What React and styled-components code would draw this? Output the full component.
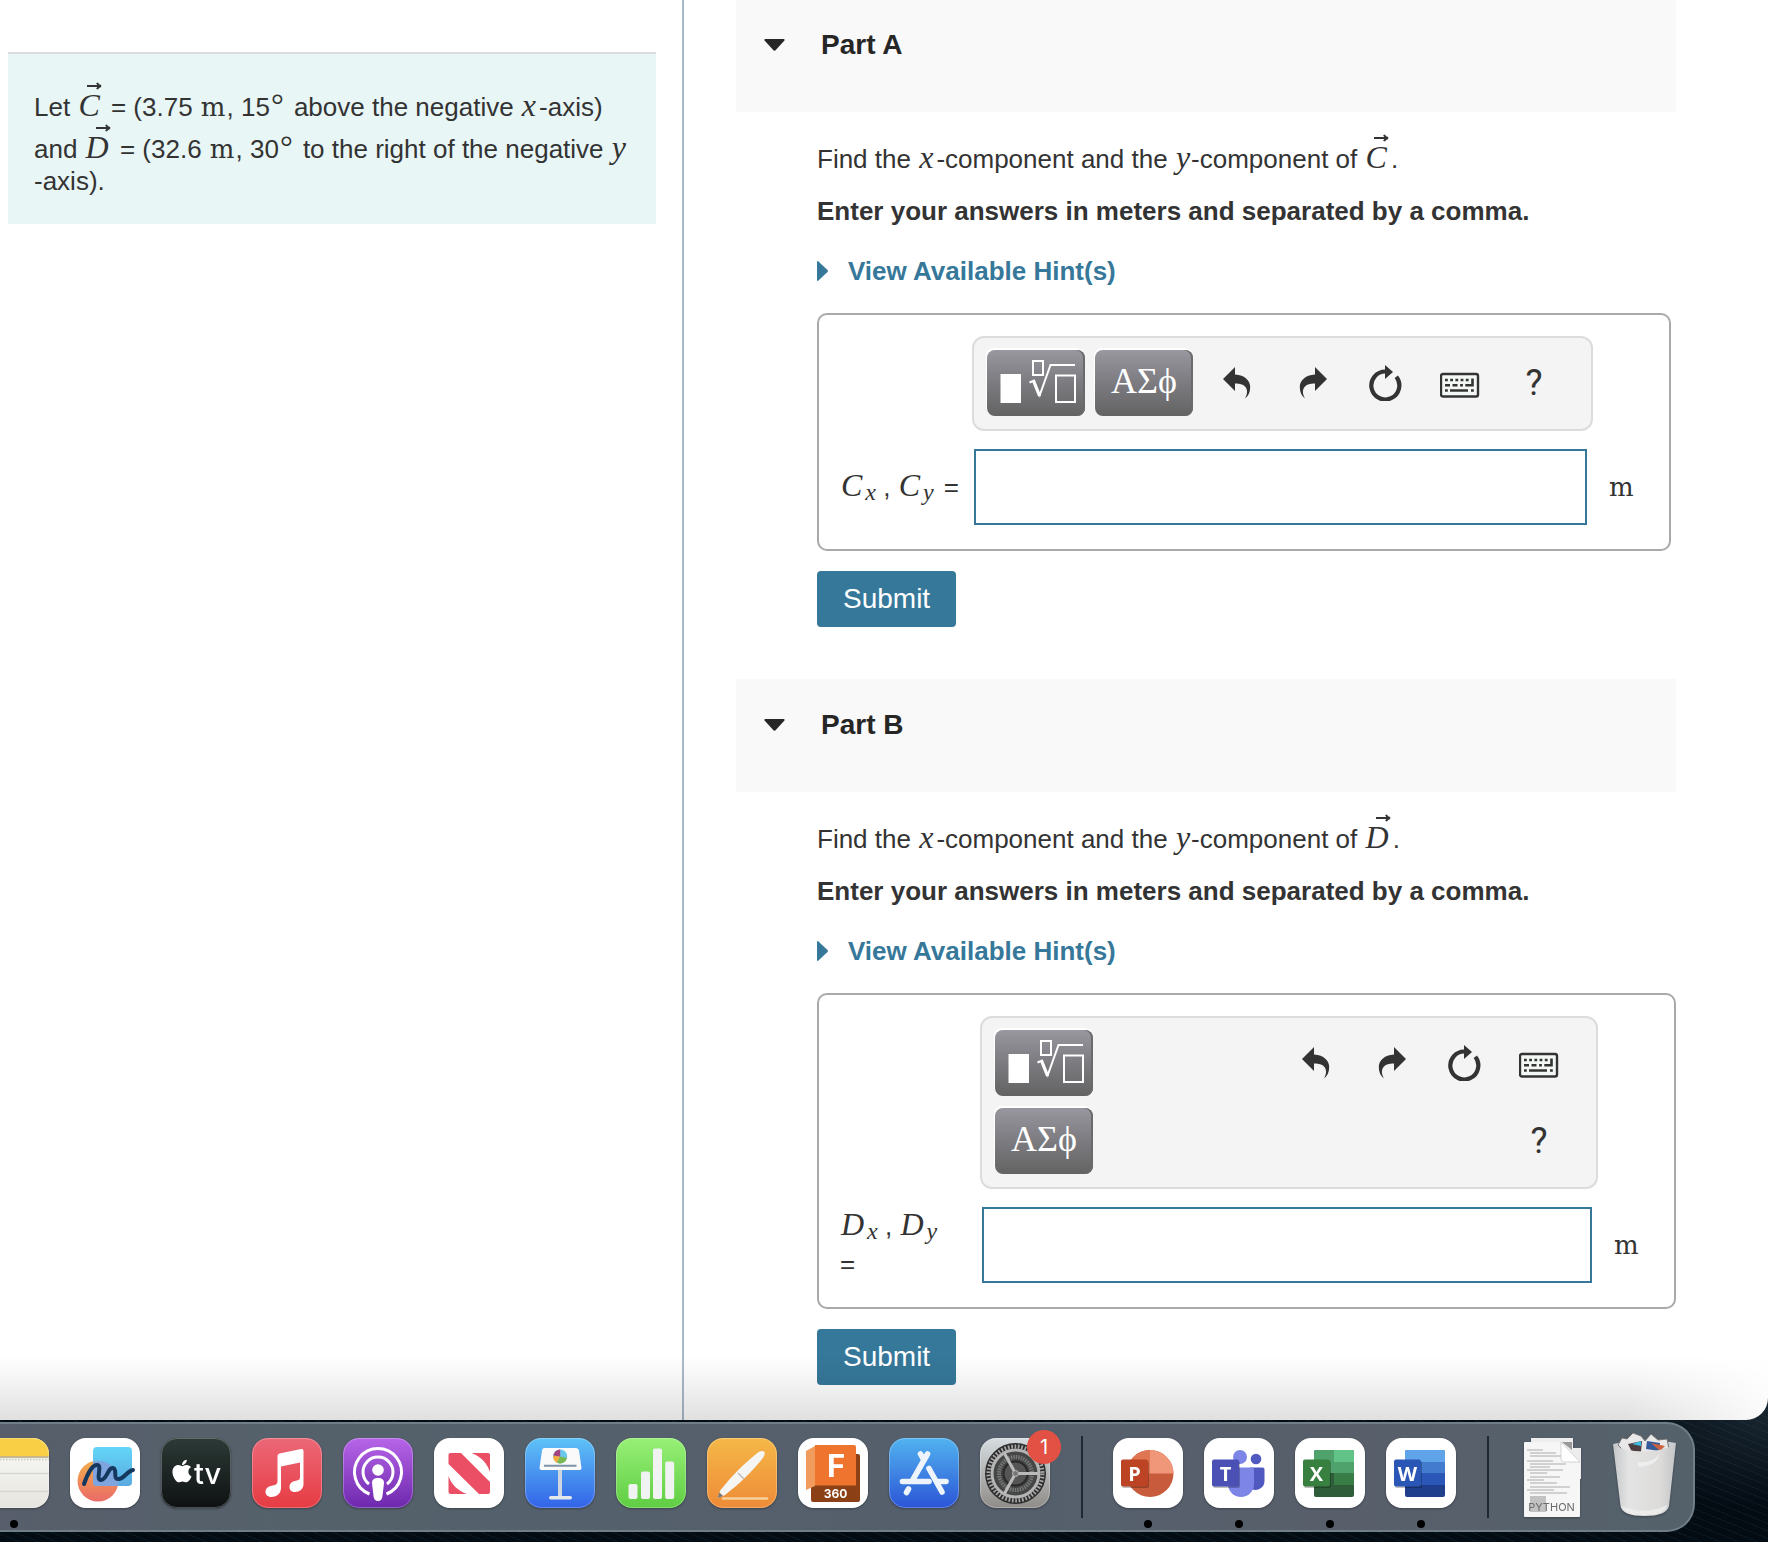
import React from "react";
import styled, { createGlobalStyle, css } from "styled-components";
import { FaApple } from "react-icons/fa";

const sans = '"Liberation Sans", Arial, Helvetica, sans-serif';
const serif = '"Liberation Serif", "Times New Roman", serif';
const slab = '"DejaVu Serif", serif';
const teal = "#36789a";

const GlobalStyle = createGlobalStyle`
  *, *::before, *::after { box-sizing: border-box; }
  body { margin: 0; background: #030b13; }
  h2, p { margin: 0; }
  button, input { font: inherit; color: inherit; }
`;

const Desktop = styled.div`
  min-height: 100vh;
  display: flex;
  flex-direction: column;
  overflow: hidden;
  font-family: ${sans};
  font-size: 26px;
  line-height: 32px;
  color: #333;
  background:
    repeating-linear-gradient(22deg, rgba(90, 120, 140, 0.1) 0 1px, transparent 1px 7px),
    radial-gradient(180px 90px at 100% 92%, #17242e, transparent),
    #030b13;
`;

const Window = styled.main`
  position: relative;
  flex: 1;
  display: grid;
  grid-template-columns: minmax(0, 684fr) minmax(0, 1084fr);
  background: #fff;
  border-bottom-right-radius: 22px;
  overflow: hidden;

  &::after {
    content: "";
    position: absolute;
    inset: auto 0 0 0;
    height: 64px;
    pointer-events: none;
    background: linear-gradient(to bottom, transparent, rgba(0, 0, 0, 0.06) 50%, rgba(0, 0, 0, 0.12));
    mask-image: linear-gradient(to right, #000 92%, rgba(0, 0, 0, 0.15));
  }
`;

const ProblemPane = styled.aside`
  padding: 52px 26px 0 8px;
  border-right: 2px solid #a9bacb;
`;

const ProblemCard = styled.p`
  padding: 27px 24px 27px 26px;
  background: #e8f6f6;
  border-top: 2px solid #dadde0;
`;

const PartsPane = styled.div`
  margin-top: -1px;
  padding: 0 92px 32px 52px;
  display: flex;
  flex-direction: column;
  gap: 52px;
`;

const PartHeader = styled.header`
  display: flex;
  align-items: flex-start;
  height: 113px;
  padding: 30px 28px;
  background: #f9f9f9;
`;

const PartToggle = styled.button`
  display: flex;
  align-items: center;
  gap: 36px;
  padding: 0;
  border: 0;
  background: none;
  color: #262626;
  font-size: 28px;
  font-weight: bold;
  line-height: 32px;
`;

const PartBody = styled.div`
  padding: 21px 0 0 81px;
  display: flex;
  flex-direction: column;
  align-items: flex-start;
`;

const Instruction = styled.p`
  margin-top: 20px;
  font-weight: bold;
`;

const HintLink = styled.button`
  display: flex;
  align-items: center;
  gap: 20px;
  margin: 28px 0 26px;
  padding: 0;
  border: 0;
  background: none;
  color: ${teal};
  font-weight: bold;
  line-height: 32px;
`;

const MathText = styled.span`
  font-family: ${serif};
  font-size: 32px;
  line-height: 0;
  font-style: ${(p) => (p.$upright ? "normal" : "italic")};
  padding: 0 ${(p) => (p.$wide ? "3px" : "1px")} 0 1px;
`;

const UnitText = styled.span`
  font-family: ${slab};
  font-size: 26px;
  line-height: 0;
  padding: 0 1px;
`;

const Sub = styled(MathText).attrs({ as: "sub" })`
  font-size: 24px;
  vertical-align: -4px;
  padding: 0;
`;

const VectorBox = styled.span`
  position: relative;
  display: inline-block;
  padding: 11px 4px 0 1px;
  font-family: ${serif};
  font-size: 32px;
  font-style: italic;
  line-height: 26px;

  svg {
    position: absolute;
    top: 1px;
    right: 2px;
  }
`;

const AnswerBox = styled.div`
  align-self: stretch;
  display: grid;
  grid-template-columns: ${(p) => (p.$stacked ? "140px" : "132px")} minmax(0, 1fr) 76px;
  row-gap: 18px;
  align-items: center;
  margin-right: ${(p) => (p.$stacked ? "0" : "5px")};
  padding: 21px 0 24px 21px;
  border: 2px solid #a9a9a9;
  border-radius: 10px;
`;

const Toolbar = styled.div`
  grid-column: 2;
  display: flex;
  justify-content: space-between;
  align-items: flex-start;
  padding: 12px 20px 13px 13px;
  background: #f4f4f4;
  border: 2px solid #dcdcdc;
  border-radius: 12px;
`;

const TemplateButtons = styled.div`
  display: flex;
  flex-direction: ${(p) => (p.$stacked ? "column" : "row")};
  gap: ${(p) => (p.$stacked ? "12px" : "10px")};
`;

const TemplateButton = styled.button`
  display: flex;
  align-items: center;
  justify-content: center;
  width: 98px;
  height: 66px;
  padding: 0 0 4px;
  border: 0;
  border-radius: 8px;
  background: linear-gradient(#99979f, #7c7b80 50%, #636363);
  box-shadow: -1px -2px 0 #fff, inset -2px 0 0 #6a6a6a;
  color: #fff;
  font-family: ${serif};
  font-size: 36px;
  line-height: 40px;

  svg { margin-bottom: -4px; }
`;

const ActionButtons = styled.div`
  display: flex;
  flex-wrap: wrap;
  justify-content: flex-end;
  row-gap: 12px;
  ${(p) => p.$stacked && css`max-width: 296px;`}
`;

const ActionButton = styled.button`
  display: flex;
  align-items: center;
  justify-content: center;
  width: 74px;
  height: 66px;
  padding: 0;
  border: 0;
  background: none;
  color: #333;
  font-family: Roboto, ${sans};
  font-size: 36px;
`;

const AnswerLabel = styled.label`
  grid-column: 1;
  display: flex;
  flex-direction: ${(p) => (p.$stacked ? "column" : "row")};
  gap: ${(p) => (p.$stacked ? "0" : "10px")};
  line-height: 38px;
  white-space: nowrap;
`;

const AnswerInput = styled.input`
  height: 76px;
  margin: 0 6px 0 2px;
  padding: 0 12px;
  min-width: 0;
  border: 2px solid ${teal};
  border-radius: 0;
  background: #fff;
  outline: none;
`;

const Unit = styled.span`
  padding-left: 15px;
`;

const SubmitButton = styled.button`
  height: 56px;
  margin-top: 20px;
  padding: 0 26px;
  border: 0;
  border-radius: 4px;
  background: ${teal};
  color: #fff;
  font-size: 28px;
`;

const Dock = styled.nav`
  align-self: flex-start;
  display: flex;
  align-items: flex-start;
  gap: 21px;
  height: 110px;
  margin: 2px 0 10px -23px;
  padding: 12px 13px 0 2px;
  border: 2px solid #707e87;
  border-left: 0;
  border-radius: 0 28px 28px 0;
  background: linear-gradient(to right, #585e6b, #54616b 20%, #555f6c 60%, #585f6b 80%, #54616b);
`;

const DockItem = styled.button`
  position: relative;
  display: flex;
  flex-direction: column;
  align-items: center;
  gap: 12px;
  flex: none;
  width: 70px;
  padding: 2px 0 0;
  border: 0;
  background: none;

  svg {
    display: block;
    overflow: visible;
    filter: drop-shadow(0 1px 1px rgba(0, 0, 0, 0.3));
  }
`;

const RunningDot = styled.span`
  width: 8px;
  height: 8px;
  border-radius: 50%;
  background: #000;
`;

const Badge = styled.span`
  position: absolute;
  top: -6px;
  right: -11px;
  width: 34px;
  height: 34px;
  border-radius: 50%;
  background: #e25143;
  color: #fff;
  font-family: Inter, ${sans};
  font-size: 20px;
  line-height: 34px;
  text-align: center;
`;

const DockDivider = styled.span`
  flex: none;
  width: 2px;
  height: 82px;
  margin: 0 9px 0 10px;
  background: #1e2833;
`;

function Vector({ children }) {
  return (
    <VectorBox>
      {children}
      <svg width="15" height="8" viewBox="0 0 15 8" aria-hidden="true">
        <path d="M0 4H13M10 0.8C10.8 2.8 12 3.6 14 4C12 4.4 10.8 5.2 10 7.2" fill="none" stroke="currentColor" strokeWidth="2" />
      </svg>
    </VectorBox>
  );
}

function TemplatesIcon() {
  return (
    <svg width="98" height="66" viewBox="0 0 98 66" fill="none" stroke="#fff" strokeWidth="2" aria-hidden="true">
      <rect x="13.5" y="24" width="20.5" height="29" fill="#fff" stroke="none" />
      <rect x="46" y="11" width="10" height="14" />
      <path d="M42.500 32.500L47 30.500L52.800 45L63.500 15H88" />
      <path d="M46.500 31L52.500 46" strokeWidth="3" />
      <rect x="69" y="25.500" width="19" height="26.500" />
    </svg>
  );
}

const undoPath = "M0 12L12 0V7.500C22 8 27.200 14 27.200 20C27.200 25 25.500 29 22 31.500C25 26 24.500 22 22 19.500C19.500 17 16 16.300 12 16.500V24Z";

function UndoIcon() {
  return (
    <svg width="30" height="32" viewBox="0 0 30 32" aria-hidden="true">
      <path d={undoPath} fill="currentColor" />
    </svg>
  );
}

function RedoIcon() {
  return (
    <svg width="30" height="32" viewBox="0 0 30 32" aria-hidden="true">
      <path d={undoPath} fill="currentColor" transform="translate(30 0) scale(-1 1)" />
    </svg>
  );
}

function ResetIcon() {
  return (
    <svg width="34" height="36" viewBox="0 0 34 36" aria-hidden="true">
      <path d="M27.300 11.800A14 14 0 1 1 17 6.500" fill="none" stroke="currentColor" strokeWidth="4.200" />
      <path d="M16 0L24 7L16 14Z" fill="currentColor" />
    </svg>
  );
}

function KeyboardIcon() {
  return (
    <svg width="40" height="36" viewBox="0 -8 40 36" aria-hidden="true">
      <rect x="1" y="1" width="37" height="22.500" rx="2" fill="#f4f8f4" stroke="currentColor" strokeWidth="2.400" />
      <g fill="none" stroke="currentColor" strokeWidth="2.600">
        <path d="M5 7H30" strokeDasharray="2.800 2.400" />
        <path d="M5 12.300H10M12.500 12.300H28" strokeDasharray="5 2.600 2.800 2.400 2.800 2.400 2.800 2.400" />
        <path d="M32.500 5.500V12.300H28" />
        <path d="M5 17.500H7.800M10 17.500H28M31 17.500H33.800" />
      </g>
    </svg>
  );
}

function Part({ letter, symbol, stacked }) {
  const inputId = `answer-${letter}`;
  return (
    <section>
      <PartHeader>
        <h2>
          <PartToggle type="button" aria-expanded="true">
            <svg width="21" height="12" viewBox="0 0 21 12" aria-hidden="true">
              <path d="M1.500 0H19.500Q21.500 0.500 20 2L12 10.800Q10.500 12.500 9 10.800L1 2Q-0.500 0.500 1.500 0Z" fill="currentColor" />
            </svg>
            Part {letter}
          </PartToggle>
        </h2>
      </PartHeader>
      <PartBody>
        <p>
          Find the <MathText $wide>x</MathText>-component and the <MathText>y</MathText>-component of{" "}
          <Vector>{symbol}</Vector>.
        </p>
        <Instruction>Enter your answers in meters and separated by a comma.</Instruction>
        <HintLink type="button">
          <svg width="11" height="20" viewBox="0 0 11 20" aria-hidden="true">
            <path d="M0 1Q0-0.500 1.500 0.500L10.500 9Q11.300 10 10.500 11L1.500 19.500Q0 20.500 0 19Z" fill="currentColor" />
          </svg>
          View Available Hint(s)
        </HintLink>
        <AnswerBox $stacked={stacked}>
          <Toolbar role="toolbar" aria-label="Equation editor">
            <TemplateButtons $stacked={stacked}>
              <TemplateButton type="button" aria-label="Templates">
                <TemplatesIcon />
              </TemplateButton>
              <TemplateButton type="button">ΑΣϕ</TemplateButton>
            </TemplateButtons>
            <ActionButtons $stacked={stacked}>
              <ActionButton type="button" aria-label="Undo"><UndoIcon /></ActionButton>
              <ActionButton type="button" aria-label="Redo"><RedoIcon /></ActionButton>
              <ActionButton type="button" aria-label="Reset"><ResetIcon /></ActionButton>
              <ActionButton type="button" aria-label="Keyboard shortcuts"><KeyboardIcon /></ActionButton>
              <ActionButton type="button">?</ActionButton>
            </ActionButtons>
          </Toolbar>
          <AnswerLabel htmlFor={inputId} $stacked={stacked}>
            <span>
              <MathText $wide>{symbol}</MathText><Sub>x</Sub> , <MathText $wide>{symbol}</MathText><Sub>y</Sub>
            </span>
            <span>=</span>
          </AnswerLabel>
          <AnswerInput id={inputId} type="text" />
          <Unit><UnitText>m</UnitText></Unit>
        </AnswerBox>
        <SubmitButton type="button">Submit</SubmitButton>
      </PartBody>
    </section>
  );
}

function Tile({ id, from, to, children }) {
  return (
    <svg width="70" height="70" viewBox="0 0 70 70" aria-hidden="true">
      <defs>
        <linearGradient id={id} x1="0" y1="0" x2="0" y2="1">
          <stop offset="0" stopColor={from} />
          <stop offset="1" stopColor={to} />
        </linearGradient>
        <clipPath id={`${id}-clip`}>
          <rect width="70" height="70" rx="16" />
        </clipPath>
      </defs>
      <rect width="70" height="70" rx="16" fill={`url(#${id})`} />
      <g clipPath={`url(#${id}-clip)`}>{children}</g>
      <rect x="0.500" y="0.500" width="69" height="69" rx="15.500" fill="none" stroke="#fff" strokeOpacity="0.250" />
    </svg>
  );
}

function NotesIcon() {
  return (
    <Tile id="notes" from="#fafaf8" to="#e6e5df">
      <rect width="70" height="18" fill="#f8cf45" />
      <path d="M0 19H70" stroke="#b9a36a" strokeWidth="1.500" />
      <path d="M0 21.500H70" stroke="#c6c6c2" strokeWidth="1.500" strokeDasharray="1.500 1.500" />
      <path d="M0 35.500H70M0 53.500H70" stroke="#d5d5d1" strokeWidth="1.500" />
    </Tile>
  );
}

function FreeformIcon() {
  return (
    <Tile id="freeform" from="#fff" to="#fff">
      <defs>
        <linearGradient id="ff-ball" x1="0" y1="0" x2="0" y2="1">
          <stop offset="0" stopColor="#f3b04c" />
          <stop offset="1" stopColor="#ea6a67" />
        </linearGradient>
        <linearGradient id="ff-card" x1="0" y1="0" x2="0" y2="1">
          <stop offset="0" stopColor="#63d6f8" />
          <stop offset="1" stopColor="#5aa9e0" />
        </linearGradient>
      </defs>
      <circle cx="28" cy="43" r="20.500" fill="url(#ff-ball)" />
      <rect x="23" y="9" width="39" height="39" rx="4" fill="url(#ff-card)" />
      <path d="M23 23.500A20.500 20.500 0 0 1 48 48H27Q23 48 23 44Z" fill="#7fa5de" />
      <path d="M14 46C17 37 22 27 27 27C33 27 25 42 31 42C37 42 38 29 43 30C48 31 42 42 49 41C55 40 57 33 63 32" fill="none" stroke="#15385e" strokeWidth="4" strokeLinecap="round" />
    </Tile>
  );
}

function TvIcon() {
  return (
    <Tile id="tv" from="#2c3a36" to="#0e1112">
      <FaApple x="8" y="20" width="24" height="27" color="#fff" />
      <text x="33" y="46" fill="#fff" fontFamily="Inter, sans-serif" fontSize="29" fontWeight="500">tv</text>
    </Tile>
  );
}

function MusicIcon() {
  return (
    <Tile id="music" from="#ec6878" to="#e63c43">
      <path d="M25.500 18Q25.500 16 27.500 15.500L49 11Q51.500 10.500 51.500 13V46C51.500 51 47.500 54 43 54C39.500 54 37.500 52 37.500 49C37.500 44 42 43 45 42.500Q48 42 48 39V24.500L29 28.500V50C29 56 24 59 19.500 59C15.500 59 13.500 56.500 13.500 54C13.500 49 18 48 21 47.500Q25.500 47 25.500 43Z" fill="#fff" />
    </Tile>
  );
}

function PodcastsIcon() {
  return (
    <Tile id="podcasts" from="#b765e8" to="#6d28ad">
      <g fill="none" stroke="#fff" strokeWidth="3">
        <path d="M26.500 56A23.500 23.500 0 1 1 43.500 56" />
        <path d="M26 46A15 15 0 1 1 44 46" />
      </g>
      <circle cx="35" cy="32" r="5.800" fill="#fff" />
      <path d="M35 40C39 40 41 41.500 41 45L39.500 58Q39 63 35 63Q31 63 30.500 58L29 45C29 41.500 31 40 35 40Z" fill="#fff" />
    </Tile>
  );
}

function NewsIcon() {
  return (
    <Tile id="news" from="#fff" to="#fff">
      <g fill="#ea4f65">
        <path d="M14.500 17Q14.500 15 16.500 15H27L56 44V54Q56 56 54 56H45L14.500 26Z" />
        <path d="M37.500 15H54Q56 15 56 17V34C53 25 47 18.500 37.500 15Z" />
        <path d="M14.500 38C17 46 24 53 33 56H16.500Q14.500 56 14.500 54Z" />
      </g>
    </Tile>
  );
}

function KeynoteIcon() {
  return (
    <Tile id="keynote" from="#5fc3f7" to="#3263e8">
      <rect x="33" y="32" width="4" height="28" fill="#cfd6df" />
      <rect x="24" y="58" width="23" height="3.500" rx="1.700" fill="#e4e7ec" />
      <path d="M19 10H51Q53.500 10 54 12.500L56.500 30Q56.500 32 54.500 32H16.500Q14.500 32 14.500 30L17 12.500Q17.500 10 19 10Z" fill="#fafafa" />
      <path d="M19 27.800H51.500" stroke="#7c93a8" strokeWidth="2" />
      <circle cx="35.200" cy="18.500" r="7" fill="#6cc7ee" />
      <path d="M35.200 18.500L42 20A7 7 0 0 1 32 24.700Z" fill="#79b84e" />
      <path d="M35.200 18.500L32 24.700A7 7 0 0 1 28.300 17.500Z" fill="#f3ab3c" />
      <path d="M35.200 18.500L28.300 17.500A7 7 0 0 1 35.200 11.500Z" fill="#a5437f" />
    </Tile>
  );
}

function NumbersIcon() {
  return (
    <Tile id="numbers" from="#97f077" to="#5fcd43">
      <g fill="#f0f3f1">
        <rect x="12.500" y="46" width="9" height="15" rx="2" />
        <rect x="25" y="33.500" width="9" height="27.500" rx="2" />
        <rect x="37" y="10.500" width="9" height="50.500" rx="2" />
        <rect x="49.200" y="23.500" width="9" height="37.500" rx="2" />
      </g>
    </Tile>
  );
}

function PagesIcon() {
  return (
    <Tile id="pages" from="#f5b848" to="#ee8b37">
      <path d="M16 60.500H60" stroke="#f9cf9c" strokeWidth="2.500" strokeLinecap="round" />
      <path d="M10.500 60L13.500 52C24 39 36 26 51 14.500Q55.500 12 57.500 14Q58.500 16.500 55.500 20.500C44 35 32 46 18 57Z" fill="#f5f5f3" />
      <path d="M31 35L37 41" stroke="#b9b9b7" strokeWidth="1.500" />
      <path d="M10.500 60L12.500 54.500L16 58Z" fill="#77736f" />
    </Tile>
  );
}

function FusionIcon() {
  return (
    <Tile id="fusion" from="#fff" to="#fff">
      <path d="M13 16H60Q62 16 62 18V62Q62 64 60 64H15Q13 64 13 62Z" fill="#8b4016" />
      <path d="M8 13L17 8V48L8 52Z" fill="#f19b5c" />
      <path d="M17 7H56Q58 7 58 9V47.500H17Z" fill="#ef742e" />
      <text x="38" y="39" textAnchor="middle" fill="#fff" fontFamily="Inter, sans-serif" fontSize="31" fontWeight="700">F</text>
      <text x="37.500" y="60" textAnchor="middle" fill="#fff" fontFamily="Inter, sans-serif" fontSize="12" fontWeight="700">360</text>
    </Tile>
  );
}

function AppStoreIcon() {
  return (
    <Tile id="appstore" from="#52b3f0" to="#2b55d6">
      <g fill="none" stroke="#eef4fb" strokeWidth="5.600" strokeLinecap="round">
        <path d="M13.500 43.500H40M49 43.500H57" />
        <path d="M38.500 16L24 41.500" />
        <path d="M31.500 16L34 20.500M40 30.500L53 54" />
        <path d="M19.500 51L17.500 54.500" />
      </g>
    </Tile>
  );
}

function SettingsIcon() {
  return (
    <Tile id="settings" from="#d6dde0" to="#8f8c88">
      <circle cx="35.500" cy="35.500" r="30.500" fill="#2d2d2d" />
      <circle cx="35.500" cy="35.500" r="27" fill="none" stroke="#a7a7a7" strokeWidth="4" strokeDasharray="1.700 1.700" />
      <circle cx="35.500" cy="35.500" r="23.500" fill="#454646" stroke="#b5b5b5" strokeWidth="3" />
      <circle cx="35.500" cy="35.500" r="16.500" fill="none" stroke="#777" strokeWidth="4" strokeDasharray="1.500 1" />
      <circle cx="35.500" cy="35.500" r="12" fill="#555" stroke="#292929" strokeWidth="2" />
      <path d="M35.500 35.500H58M35.500 35.500L24.500 15.500M35.500 35.500L24.500 55.500" stroke="#bbb" strokeWidth="3" />
      <circle cx="35.500" cy="35.500" r="3" fill="#777" stroke="#bbb" />
    </Tile>
  );
}

function OfficeBadge({ color, letter }) {
  return (
    <>
      <rect x="9" y="23" width="27" height="27" rx="2" fill="#000" opacity="0.250" />
      <rect x="8" y="21.500" width="27" height="27" rx="2" fill={color} />
      <text x="21.500" y="42.500" textAnchor="middle" fill="#fff" fontFamily="'Open Sans', sans-serif" fontSize="20" fontWeight="700">{letter}</text>
    </>
  );
}

function PowerPointIcon() {
  return (
    <Tile id="powerpoint" from="#fff" to="#fff">
      <circle cx="37" cy="35.500" r="23.500" fill="#c75b3b" />
      <path d="M37 35.500V12A23.500 23.500 0 0 0 13.500 35.500Z" fill="#df7552" />
      <path d="M37 35.500V12A23.500 23.500 0 0 1 60.500 35.500Z" fill="#f0977a" />
      <OfficeBadge color="#bc4425" letter="P" />
    </Tile>
  );
}

function TeamsIcon() {
  return (
    <Tile id="teams" from="#fff" to="#fff">
      <circle cx="52" cy="21" r="5.300" fill="#5059c0" />
      <path d="M46 29.500H58.500Q60.500 29.500 60.500 31.500V43A9 9 0 0 1 46 50Z" fill="#5059c0" />
      <circle cx="36" cy="19" r="7" fill="#7d85e6" />
      <path d="M24 29.500H48Q50 29.500 50 31.500V46A13 13 0 0 1 24 46Z" fill="#7d85e6" />
      <OfficeBadge color="#4b50b5" letter="T" />
    </Tile>
  );
}

function ExcelIcon() {
  return (
    <Tile id="excel" from="#fff" to="#fff">
      <rect x="19" y="12" width="40" height="47" rx="2" fill="#2f5c39" />
      <path d="M19 14Q19 12 21 12H39V35H19Z" fill="#50a26d" />
      <path d="M39 12H57Q59 12 59 14V24H39Z" fill="#62c388" />
      <path d="M39 24H59V35.500H39Z" fill="#50a26d" />
      <path d="M39 35.500H59V47H39Z" fill="#387c46" />
      <OfficeBadge color="#37803f" letter="X" />
    </Tile>
  );
}

function WordIcon() {
  return (
    <Tile id="word" from="#fff" to="#fff">
      <rect x="19" y="12" width="40" height="47" rx="2" fill="#1f3f8c" />
      <path d="M19 14Q19 12 21 12H57Q59 12 59 14V24H19Z" fill="#5fa3e8" />
      <path d="M19 24H59V35.500H19Z" fill="#437bcf" />
      <path d="M19 35.500H59V47H19Z" fill="#2b58b8" />
      <OfficeBadge color="#2a57b5" letter="W" />
    </Tile>
  );
}

function DownloadsIcon() {
  const lines = [12, 15, 18, 23, 26, 29, 32, 35, 39, 42, 45, 49, 52, 55];
  return (
    <svg width="70" height="80" viewBox="0 0 70 80" aria-hidden="true">
      <path d="M12 0H54V10H62V41H12Z" fill="#ededed" />
      <path d="M5 5Q5 4 6 4H42L61 24V78Q61 79 60 79H6Q5 79 5 78Z" fill="#f6f6f6" />
      {lines.map((y, i) => (
        <path key={y} d={`M${i % 3 === 0 ? 8 : 11} ${y}H${24 + ((i * 13) % 29)}`} stroke="#a3a3a3" strokeWidth="0.900" />
      ))}
      <rect x="11" y="58" width="16" height="16" fill="#c2c2c2" />
      <path d="M42 4V21Q42 24 45 24H61Z" fill="#fff" stroke="#c9c9c9" strokeWidth="0.800" />
      <path d="M43 4H53V12Z" fill="#999" />
      <text x="32.500" y="73" textAnchor="middle" fill="#6b6b6b" fontFamily="Inter, sans-serif" fontSize="11">PYTHON</text>
    </svg>
  );
}

function TrashIcon() {
  return (
    <svg width="70" height="80" viewBox="0 2 70 80" aria-hidden="true">
      <defs>
        <linearGradient id="bin" x1="0" y1="0" x2="1" y2="0">
          <stop offset="0" stopColor="#c4c7c9" />
          <stop offset="0.250" stopColor="#e4e4e4" />
          <stop offset="0.750" stopColor="#dcdbda" />
          <stop offset="1" stopColor="#c3c5c7" />
        </linearGradient>
      </defs>
      <path d="M3 8Q34 0 66 7L58 18H12Z" fill="#c9cdd0" />
      <path d="M8 9L12 2L17 3L23-3L31 0L35 5L41-2L48 4L57 3L59 13L35 17L14 15Z" fill="#e8e8e8" stroke="#777" strokeWidth="1" />
      <path d="M18 8L32 5L31 16H22Z" fill="#4d3e42" />
      <path d="M22 8L31 5V10Z" fill="#3cbfe3" />
      <path d="M37 5L50 7L49 15L36 13Z" fill="#365a9a" />
      <path d="M41 7L55 10L50 15Z" fill="#c96340" />
      <path d="M3 8C15 18 54 18 66 7L59 70Q57 80 34.500 80Q12 80 10.500 70Z" fill="url(#bin)" />
      <path d="M28 26Q42 28 49 18Q48 30 28 31Z" fill="#f3f3f3" opacity="0.700" />
      <path d="M12 70Q34 80 57 69Q56 79 34.500 79Q13 79 12 70Z" fill="#f1f1f1" opacity="0.700" />
    </svg>
  );
}

const dockGroups = [
  [
    { name: "Notes", Icon: NotesIcon, running: true },
    { name: "Freeform", Icon: FreeformIcon },
    { name: "TV", Icon: TvIcon },
    { name: "Music", Icon: MusicIcon },
    { name: "Podcasts", Icon: PodcastsIcon },
    { name: "News", Icon: NewsIcon },
    { name: "Keynote", Icon: KeynoteIcon },
    { name: "Numbers", Icon: NumbersIcon },
    { name: "Pages", Icon: PagesIcon },
    { name: "Fusion 360", Icon: FusionIcon },
    { name: "App Store", Icon: AppStoreIcon },
    { name: "System Settings", Icon: SettingsIcon, badge: 1 },
  ],
  [
    { name: "PowerPoint", Icon: PowerPointIcon, running: true },
    { name: "Teams", Icon: TeamsIcon, running: true },
    { name: "Excel", Icon: ExcelIcon, running: true },
    { name: "Word", Icon: WordIcon, running: true },
  ],
  [
    { name: "Downloads", Icon: DownloadsIcon },
    { name: "Trash", Icon: TrashIcon },
  ],
];

export default function App() {
  return (
    <Desktop>
      <GlobalStyle />
      <Window>
        <ProblemPane>
          <ProblemCard>
            Let <Vector>C</Vector> = (3.75 <UnitText>m</UnitText>, 15
            <MathText $upright $wide>°</MathText> above the negative <MathText $wide>x</MathText>-axis)
            <br />
            and <Vector>D</Vector> = (32.6 <UnitText>m</UnitText>, 30
            <MathText $upright $wide>°</MathText> to the right of the negative <MathText>y</MathText>
            <wbr />-axis).
          </ProblemCard>
        </ProblemPane>
        <PartsPane>
          <Part letter="A" symbol="C" />
          <Part letter="B" symbol="D" stacked />
        </PartsPane>
      </Window>
      <Dock aria-label="Dock">
        {dockGroups.map((group, index) => (
          <React.Fragment key={group[0].name}>
            {index > 0 && <DockDivider />}
            {group.map(({ name, Icon, running, badge }) => (
              <DockItem key={name} type="button" aria-label={name}>
                <Icon />
                {badge && <Badge>{badge}</Badge>}
                {running && <RunningDot />}
              </DockItem>
            ))}
          </React.Fragment>
        ))}
      </Dock>
    </Desktop>
  );
}
